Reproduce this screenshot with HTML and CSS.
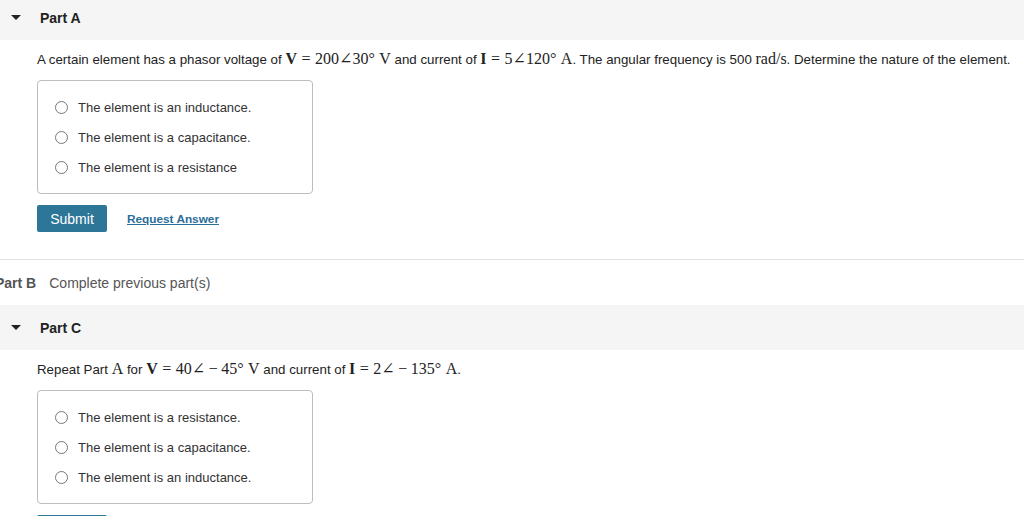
FILE: index.html
```html
<!DOCTYPE html>
<html lang="en">
<head>
    <meta charset="UTF-8">
    <link rel="stylesheet" href="styles.css">
</head>
<body>
    <div class="page">
        <div class="part-header">
            <span class="caret"></span>
            <span class="part-title">Part A</span>
        </div>
        <div class="part-body">
            <p class="question">A certain element has a phasor voltage of <span class="math"><b>V</b><span class="rel">=</span>200∠30°<span class="sp"></span>V</span> and current of <span class="math"><b>I</b><span class="rel">=</span>5∠120°<span class="sp"></span>A</span>. The angular frequency is 500 <span class="math">rad/s</span>. Determine the nature of the element.</p>
            <div class="options">
                <label class="option"><span class="radio"></span>The element is an inductance.</label>
                <label class="option"><span class="radio"></span>The element is a capacitance.</label>
                <label class="option"><span class="radio"></span>The element is a resistance</label>
            </div>
            <div class="actions">
                <button class="submit">Submit</button>
                <a class="request" href="#">Request Answer</a>
            </div>
        </div>

        <div class="part-locked">
            <span class="locked-title">Part B</span>
            <span class="locked-note">Complete previous part(s)</span>
        </div>

        <div class="part-header">
            <span class="caret"></span>
            <span class="part-title">Part C</span>
        </div>
        <div class="part-body">
            <p class="question">Repeat Part <span class="math">A</span> for <span class="math"><b>V</b><span class="rel">=</span>40∠<span class="bin">−</span>45°<span class="sp"></span>V</span> and current of <span class="math"><b>I</b><span class="rel">=</span>2∠<span class="bin">−</span>135°<span class="sp"></span>A</span>.</p>
            <div class="options">
                <label class="option"><span class="radio"></span>The element is a resistance.</label>
                <label class="option"><span class="radio"></span>The element is a capacitance.</label>
                <label class="option"><span class="radio"></span>The element is an inductance.</label>
            </div>
            <div class="actions">
                <button class="submit">Submit</button>
                <a class="request" href="#">Request Answer</a>
            </div>
        </div>
    </div>
</body>
</html>
```

FILE: styles.css
```css
* {
    margin: 0;
    padding: 0;
    box-sizing: border-box;
}

body {
    font-family: "Liberation Sans", Arial, sans-serif;
    color: #222;
    background: white;
    overflow: hidden;
}

.page {
    margin-top: -5px;
}

.part-header {
    height: 45px;
    background: #f5f5f5;
    display: flex;
    align-items: center;
    padding-left: 11px;
}

.caret {
    width: 0;
    height: 0;
    border-left: 5px solid transparent;
    border-right: 5px solid transparent;
    border-top: 5px solid #222;
    margin-right: 19px;
}

.part-title {
    font-size: 14px;
    font-weight: bold;
    color: #222;
}

.part-body {
    padding: 12px 0 27px 37px;
    border-bottom: 1px solid #e0e0e0;
}

.question {
    font-size: 13.3px;
    line-height: 16px;
    height: 16px;
    color: #222;
    white-space: nowrap;
}

.math {
    font-family: "Liberation Serif", "DejaVu Serif", serif;
    font-size: 16px;
    line-height: 0;
}

.rel {
    padding: 0 4.5px;
}

.bin {
    padding: 0 3.5px;
}

.sp {
    display: inline-block;
    width: 4.5px;
}

.options {
    width: 276px;
    margin-top: 12px;
    padding: 11px 0;
    border: 1px solid #bdbdbd;
    border-radius: 4px;
    display: flex;
    flex-direction: column;
}

.option {
    height: 30px;
    display: flex;
    align-items: center;
    padding-left: 17px;
    font-size: 13px;
    color: #333;
}

.radio {
    width: 13px;
    height: 13px;
    border: 1px solid #777;
    border-radius: 50%;
    margin-right: 10px;
}

.actions {
    margin-top: 11px;
    display: flex;
    align-items: center;
    gap: 20px;
}

.submit {
    width: 70px;
    height: 27px;
    background: #2e7698;
    color: white;
    border: none;
    border-radius: 2px;
    font-family: "Liberation Sans", Arial, sans-serif;
    font-size: 14px;
}

.request {
    font-size: 11.8px;
    font-weight: bold;
    color: #2a6e99;
    text-decoration: underline;
}

.part-locked {
    height: 45px;
    display: flex;
    align-items: center;
    margin-left: -5px;
    gap: 13px;
}

.locked-title {
    font-size: 14px;
    font-weight: bold;
    color: #555;
}

.locked-note {
    font-size: 14px;
    color: #555;
}
```
